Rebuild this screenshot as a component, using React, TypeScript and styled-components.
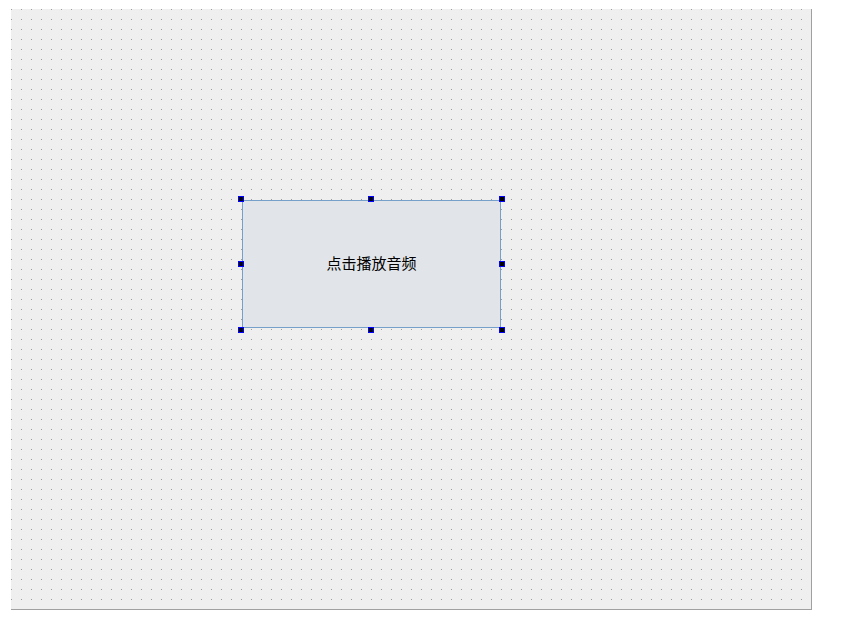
import React from "react";
import styled, { createGlobalStyle } from "styled-components";

const Global = createGlobalStyle`
  html, body { margin: 0; padding: 0; background: #ffffff; }
  body { font-family: "Noto Sans CJK SC", "Liberation Sans", sans-serif; }
`;

const Page = styled.div`
  width: 851px;
  height: 641px;
  padding: 9px 0 0 11px;
  box-sizing: border-box;
  background: #ffffff;
`;

const Form = styled.div`
  position: relative;
  width: 800px;
  height: 600px;
  background-color: #efefef;
  background-image:
    linear-gradient(to bottom, transparent 1px, #efefef 1px),
    linear-gradient(to right, #9c9c9c 1px, #efefef 1px);
  background-size: 10px 10px, 10px 10px;
  border-right: 1px solid #a0a0a0;
  border-bottom: 1px solid #a0a0a0;
`;

const PushButton = styled.div`
  position: absolute;
  left: 231px;
  top: 191px;
  width: 259px;
  height: 128px;
  box-sizing: border-box;
  border: 1px solid #76a0c9;
  background: #e1e5e9;
  display: flex;
  align-items: center;
  justify-content: center;
  padding-bottom: 3px;
  font-family: "Noto Sans CJK SC", sans-serif;
  font-size: 15px;
  color: #000000;
`;

const Handle = styled.div<{ $x: number; $y: number }>`
  position: absolute;
  left: ${(p) => p.$x}px;
  top: ${(p) => p.$y}px;
  width: 6px;
  height: 6px;
  box-sizing: border-box;
  border: 1px solid #0000ff;
  background: #000000;
`;

const handles: Array<[number, number]> = [
  [-5, -5],
  [125, -5],
  [256, -5],
  [-5, 60],
  [256, 60],
  [-5, 126],
  [125, 126],
  [256, 126],
];

export default function App() {
  return (
    <>
      <Global />
      <Page>
        <Form>
          <PushButton>
            点击播放音频
            {handles.map(([x, y], i) => (
              <Handle key={i} $x={x} $y={y} />
            ))}
          </PushButton>
        </Form>
      </Page>
    </>
  );
}
